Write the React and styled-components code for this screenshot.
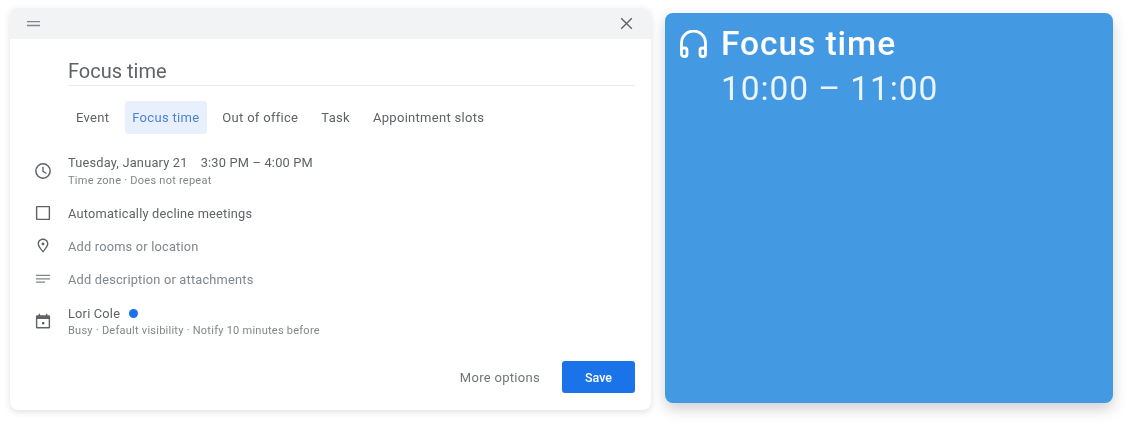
import React from "react"
import styled, { createGlobalStyle } from "styled-components"

const GlobalStyle = createGlobalStyle`
    html, body {
        margin: 0;
        padding: 0;
        background: #ffffff;
        font-family: Roboto, "Liberation Sans", sans-serif;
    }
`

const Page = styled.div`
    width: 1132px;
    height: 424px;
    overflow: hidden;
    display: flex;
    align-items: flex-start;
    gap: 14px;
    padding: 8px 0 0 10px;
    box-sizing: border-box;
    filter: blur(0.6px);
`

const Dialog = styled.div`
    width: 641px;
    height: 402px;
    flex: none;
    display: flex;
    flex-direction: column;
    background: #fff;
    border-radius: 8px;
    overflow: hidden;
    box-shadow: 0 2px 6px rgba(60, 64, 67, 0.16);
`

const DialogHeader = styled.div`
    height: 31px;
    flex: none;
    display: flex;
    align-items: center;
    justify-content: space-between;
    padding: 0 18px 0 17px;
    background: #f1f3f4;
`

const DialogBody = styled.div`
    flex: 1;
    display: flex;
    flex-direction: column;
    padding: 0 16px 0 58px;
`

const TitleField = styled.div`
    height: 47px;
    box-sizing: border-box;
    padding-top: 20px;
    font-size: 20px;
    line-height: 24px;
    color: #5f6368;
    border-bottom: 1px solid #e8eaed;
`

const Tabs = styled.div`
    display: flex;
    gap: 8px;
    margin: 15px 0 0 0.5px;
`

const Tab = styled.div`
    height: 33px;
    padding: 0 7.5px;
    display: flex;
    align-items: center;
    border-radius: 3px;
    font-size: 13px;
    letter-spacing: 0.3px;
    color: ${(props) => (props.$active ? "#4f7fd9" : "#5f6368")};
    background: ${(props) => (props.$active ? "#e8f0fe" : "transparent")};
`

const Row = styled.div`
    display: flex;
    position: relative;
    min-height: ${(props) => props.$height}px;
    margin-top: ${(props) => props.$top}px;
    flex-direction: column;
    justify-content: center;
`

const RowIcon = styled.div`
    position: absolute;
    left: -35px;
    top: 50%;
    width: 20px;
    height: 20px;
    transform: translateY(-50%);
    color: #5f6368;

    svg {
        display: block;
        width: 20px;
        height: 20px;
    }
`

const MainText = styled.div`
    font-size: 12.8px;
    line-height: 17px;
    letter-spacing: 0.2px;
    color: ${(props) => (props.$muted ? "#80868b" : "#5f6368")};
    display: flex;
    align-items: center;
`

const TimeRange = styled.span`
    margin-left: 13px;
    letter-spacing: 0.2px;
`

const SubText = styled.div`
    font-size: 11px;
    line-height: 15px;
    margin-top: ${(props) => props.$gap}px;
    letter-spacing: 0.25px;
    color: #80868b;
`

const Dot = styled.span`
    width: 9px;
    height: 9px;
    margin-left: 9px;
    border-radius: 50%;
    background: #1a73e8;
`

const Actions = styled.div`
    margin-top: auto;
    padding-bottom: 17px;
    display: flex;
    align-items: center;
    justify-content: flex-end;
    gap: 22px;
`

const MoreOptions = styled.span`
    font-size: 13px;
    letter-spacing: 0.3px;
    color: #70757a;
`

const SaveButton = styled.button`
    width: 73px;
    height: 32px;
    border: 0;
    border-radius: 3px;
    background: #1a73e8;
    color: #fff;
    font-family: inherit;
    font-size: 12.5px;
    font-weight: 500;
`

const EventCard = styled.div`
    width: 448px;
    height: 390px;
    flex: none;
    margin-top: 5px;
    box-sizing: border-box;
    padding: 8px 0 0 15px;
    display: grid;
    grid-template-columns: 27px 1fr;
    grid-auto-rows: 45px;
    column-gap: 14px;
    align-content: start;
    align-items: center;
    border-radius: 8px;
    background: #4399e2;
    color: #fff;
    box-shadow: 0 6px 14px rgba(60, 64, 67, 0.24);
`

const CardTitle = styled.div`
    font-size: 33.5px;
    font-weight: 500;
    letter-spacing: 0.95px;
    white-space: nowrap;
`

const CardTime = styled.div`
    grid-column: 2;
    font-size: 33.5px;
    letter-spacing: 0.9px;
    white-space: nowrap;
    color: #eaf4fd;
`

function Icon({ children }) {
    return (
        <svg viewBox="0 0 24 24" fill="currentColor">
            {children}
        </svg>
    )
}

export default function App() {
    return (
        <Page>
            <GlobalStyle />
            <Dialog>
                <DialogHeader>
                    <svg width="14" height="6" viewBox="0 0 14 6">
                        <path d="M0 0.5h13M0 4.5h13" stroke="#80868b" strokeWidth="1.4" />
                    </svg>
                    <svg width="13" height="13" viewBox="0 0 13 13">
                        <path d="M1.2 1.2l10.6 10.6M11.8 1.2L1.2 11.8" stroke="#5f6368" strokeWidth="1.4" />
                    </svg>
                </DialogHeader>
                <DialogBody>
                    <TitleField>Focus time</TitleField>
                    <Tabs>
                        <Tab>Event</Tab>
                        <Tab $active>Focus time</Tab>
                        <Tab>Out of office</Tab>
                        <Tab>Task</Tab>
                        <Tab>Appointment slots</Tab>
                    </Tabs>
                    <Row $height={34} $top={20}>
                        <RowIcon>
                            <Icon>
                                <path d="M12 2.5a9.5 9.5 0 1 0 0 19 9.5 9.5 0 0 0 0-19zm0 17.2a7.7 7.7 0 1 1 0-15.4 7.7 7.7 0 0 1 0 15.4z" />
                                <path d="M12.8 7h-1.6v5.8l4.6 2.8.8-1.3-3.8-2.3z" />
                            </Icon>
                        </RowIcon>
                        <MainText>
                            Tuesday, January 21
                            <TimeRange>3:30 PM – 4:00 PM</TimeRange>
                        </MainText>
                        <SubText $gap={2}>Time zone · Does not repeat</SubText>
                    </Row>
                    <Row $height={20} $top={15}>
                        <RowIcon>
                            <Icon>
                                <path d="M4.5 3.500h15a1 1 0 0 1 1 1v15a1 1 0 0 1-1 1h-15a1 1 0 0 1-1-1v-15a1 1 0 0 1 1-1zm.7 1.700v13.600h13.600V5.200z" />
                            </Icon>
                        </RowIcon>
                        <MainText>Automatically decline meetings</MainText>
                    </Row>
                    <Row $height={20} $top={13}>
                        <RowIcon>
                            <Icon>
                                <path d="M12 3c-3.700 0-6.500 2.800-6.500 6.400 0 2.600 2.100 5.800 6.500 10.600 4.400-4.800 6.500-8 6.500-10.600C18.500 5.800 15.700 3 12 3zm0 14.600c-3.200-3.700-4.800-6.400-4.800-8.200 0-2.700 2.100-4.700 4.800-4.700s4.800 2 4.800 4.700c0 1.800-1.600 4.500-4.800 8.200z" />
                                <circle cx="12" cy="9.500" r="1.700" />
                            </Icon>
                        </RowIcon>
                        <MainText $muted>Add rooms or location</MainText>
                    </Row>
                    <Row $height={20} $top={13}>
                        <RowIcon>
                            <Icon>
                                <path d="M3.500 7h17v1.500h-17zM3.500 11h17v1.500h-17zM3.500 15h11v1.500h-11z" fill="#80868b" />
                            </Icon>
                        </RowIcon>
                        <MainText $muted>Add description or attachments</MainText>
                    </Row>
                    <Row $height={34} $top={15}>
                        <RowIcon>
                            <Icon>
                                <path d="M19 5h-1.800V3.200h-1.700V5h-7V3.200H6.800V5H5a1.500 1.500 0 0 0-1.500 1.500v13A1.500 1.500 0 0 0 5 21h14a1.500 1.500 0 0 0 1.500-1.500v-13A1.500 1.500 0 0 0 19 5zm-.2 14.300H5.200V9.500h13.600z" />
                                <rect x="10.800" y="13.200" width="2.800" height="2.800" />
                            </Icon>
                        </RowIcon>
                        <MainText>
                            Lori Cole
                            <Dot />
                        </MainText>
                        <SubText $gap={1}>Busy · Default visibility · Notify 10 minutes before</SubText>
                    </Row>
                    <Actions>
                        <MoreOptions>More options</MoreOptions>
                        <SaveButton>Save</SaveButton>
                    </Actions>
                </DialogBody>
            </Dialog>
            <EventCard>
                <svg width="27" height="28" viewBox="0 0 27 28" fill="none" stroke="#fff" strokeWidth="2.800">
                    <path d="M1.500 21V13a12 12 0 0 1 24 0v8" />
                    <rect x="1.500" y="18" width="5.500" height="8.500" rx="2.200" />
                    <rect x="20" y="18" width="5.500" height="8.500" rx="2.200" />
                </svg>
                <CardTitle>Focus time</CardTitle>
                <CardTime>10:00 – 11:00</CardTime>
            </EventCard>
        </Page>
    )
}
